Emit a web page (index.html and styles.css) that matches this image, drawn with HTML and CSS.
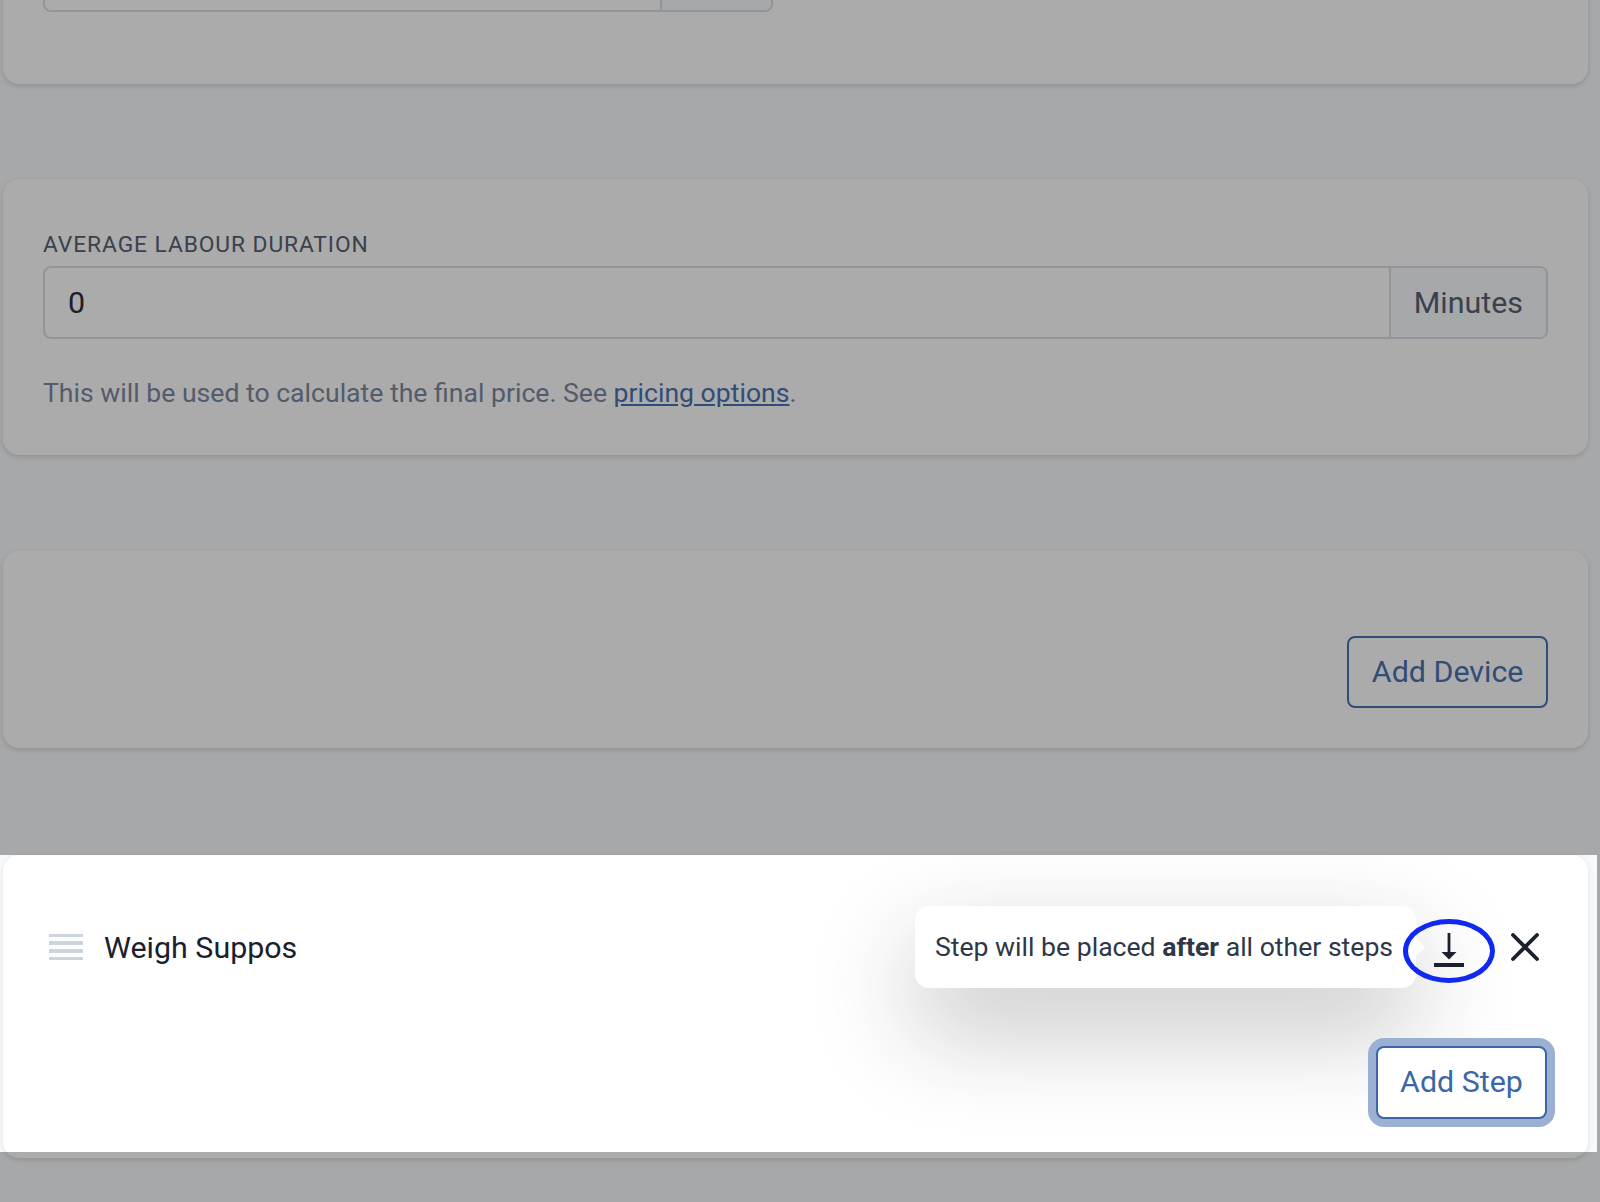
FILE: index.html
```html
<!DOCTYPE html>
<html lang="en">
<head>
<meta charset="utf-8">
<title>Steps</title>
<link rel="stylesheet" href="styles.css">
</head>
<body>
<div class="page">
  <section class="card card-top">
    <div class="field field-top">
      <div class="field-input"></div>
      <div class="field-addon"></div>
    </div>
  </section>

  <section class="card card-labour">
    <div class="label">AVERAGE LABOUR DURATION</div>
    <div class="field">
      <div class="field-input">0</div>
      <div class="field-addon">Minutes</div>
    </div>
    <p class="help">This will be used to calculate the final price. See <a href="#">pricing options</a>.</p>
  </section>

  <section class="card card-device">
    <button class="btn">Add Device</button>
  </section>

  <section class="card card-step">
    <div class="spotlight">
      <div class="step-inner">
        <div class="step-row">
          <div class="handle"><span></span><span></span><span></span><span></span></div>
          <div class="step-name">Weigh Suppos</div>
          <div class="step-actions">
            <div class="placement">
              <svg class="icon-down" viewBox="0 0 32 36" width="32" height="36" aria-hidden="true">
                <path d="M16 0V21" fill="none" stroke="#1a202c" stroke-width="2.800"/>
                <path d="M8.500 19H23.500L16 26.500Z" fill="#1a202c"/>
                <path d="M1 32H31" fill="none" stroke="#1a202c" stroke-width="4"/>
              </svg>
              <div class="tooltip">Step will be placed <b>after</b> all other steps</div>
            </div>
            <svg class="icon-close" viewBox="0 0 28 28" width="28" height="28" aria-hidden="true">
              <path d="M2 2L26 26M26 2L2 26" fill="none" stroke="#1a202c" stroke-width="3.800" stroke-linecap="round"/>
            </svg>
          </div>
        </div>
        <div class="step-footer">
          <button class="btn btn-focus">Add Step</button>
        </div>
      </div>
    </div>
  </section>
</div>
<div class="overlay"></div>
</body>
</html>
```
FILE: styles.css
```css
* { box-sizing: border-box; }
html, body { margin: 0; padding: 0; }
body {
  height: 1202px;
  overflow: hidden;
  background: #f7fafc;
  font-family: Roboto, "Liberation Sans", sans-serif;
  color: #1a202c;
}
.page {
  position: relative;
  height: 1202px;
  padding: 0 12px 0 3px;
  overflow: hidden;
}
.overlay {
  position: absolute;
  inset: 0;
  z-index: 1;
  background: rgba(33, 33, 33, 0.38);
}
.card {
  background: #fff;
  border-radius: 16px;
  box-shadow: 0 2px 6px rgba(0, 0, 0, 0.1), 0 2px 4px rgba(0, 0, 0, 0.06);
  padding: 0 40px;
}
.card-top {
  height: 144px;
  margin-top: -60px;
}
.field {
  display: flex;
  height: 73px;
  border: 2px solid #d5dbe6;
  border-radius: 8px;
  font-size: 30.4px;
}
.field-top {
  width: 730px;
  height: 72px;
}
.field-input {
  flex: 1;
  padding-left: 23px;
  line-height: 69px;
  color: #1a202c;
}
.field-addon {
  padding: 0 23px;
  line-height: 69px;
  background: #f7fafc;
  border-left: 2px solid #d5dbe6;
  border-radius: 0 6px 6px 0;
  color: #4a5568;
}
.field-top .field-addon { width: 111px; }
.card-labour {
  height: 276px;
  margin-top: 95px;
  padding-top: 51px;
}
.label {
  height: 36px;
  font-size: 22.8px;
  line-height: 30px;
  letter-spacing: 0.9px;
  color: #4a5568;
}
.help {
  margin: 36px 0 0;
  font-size: 26.6px;
  line-height: 36px;
  color: #718096;
}
.help a { color: #3b66a8; }
.card-device {
  display: flex;
  justify-content: flex-end;
  height: 197px;
  margin-top: 96px;
  padding-top: 85px;
}
.btn {
  height: 72px;
  padding: 0 22.5px;
  background: #fff;
  border: 2px solid #3b66a8;
  border-radius: 8px;
  font: 30.4px/1 Roboto, "Liberation Sans", sans-serif;
  color: #3b66a8;
}
.card-step {
  position: relative;
  height: 303px;
  margin-top: 107px;
}
.spotlight {
  position: absolute;
  z-index: 2;
  left: -3px;
  top: 0;
  width: 1597px;
  height: 297px;
  overflow: hidden;
  background: #f7fafc;
}
.step-inner {
  isolation: isolate;
  width: 1585px;
  height: 303px;
  margin-left: 3px;
  padding: 60px 41px 0 46px;
  background: #fff;
  border-radius: 16px;
  box-shadow: 0 2px 6px rgba(0, 0, 0, 0.1);
}
.step-row {
  display: flex;
  align-items: center;
  height: 64px;
}
.handle {
  display: flex;
  flex-direction: column;
  gap: 4px;
  width: 34px;
}
.handle span {
  height: 3.7px;
  background: #cbd5e0;
}
.step-name {
  margin-left: 21px;
  font-size: 30.4px;
  color: #1a202c;
}
.step-actions {
  display: flex;
  align-items: center;
  margin-left: auto;
  margin-right: 8px;
}
.placement {
  position: relative;
  display: flex;
  align-items: center;
  justify-content: center;
  width: 92px;
  height: 64px;
  margin: 7px 16px 0 0;
  border: 5px solid #1029f0;
  border-radius: 50%;
}
.tooltip {
  position: absolute;
  z-index: -1;
  right: 74px;
  top: -17.5px;
  width: 501px;
  height: 82px;
  padding-left: 20px;
  background: #fff;
  border-radius: 14px;
  box-shadow: 0 40px 100px rgba(33, 33, 33, 0.28);
  font-size: 26.6px;
  line-height: 82px;
  white-space: nowrap;
  color: #2d3748;
}
.tooltip::after {
  content: "";
  position: absolute;
  left: 100%;
  top: 32px;
  border: 9px solid transparent;
  border-left-color: #fff;
}
.step-footer {
  display: flex;
  justify-content: flex-end;
  margin-top: 67px;
}
.btn-focus {
  width: 171px;
  height: 73px;
  padding: 0;
  box-shadow: 0 0 0 8px #9bb0d3;
}
```
